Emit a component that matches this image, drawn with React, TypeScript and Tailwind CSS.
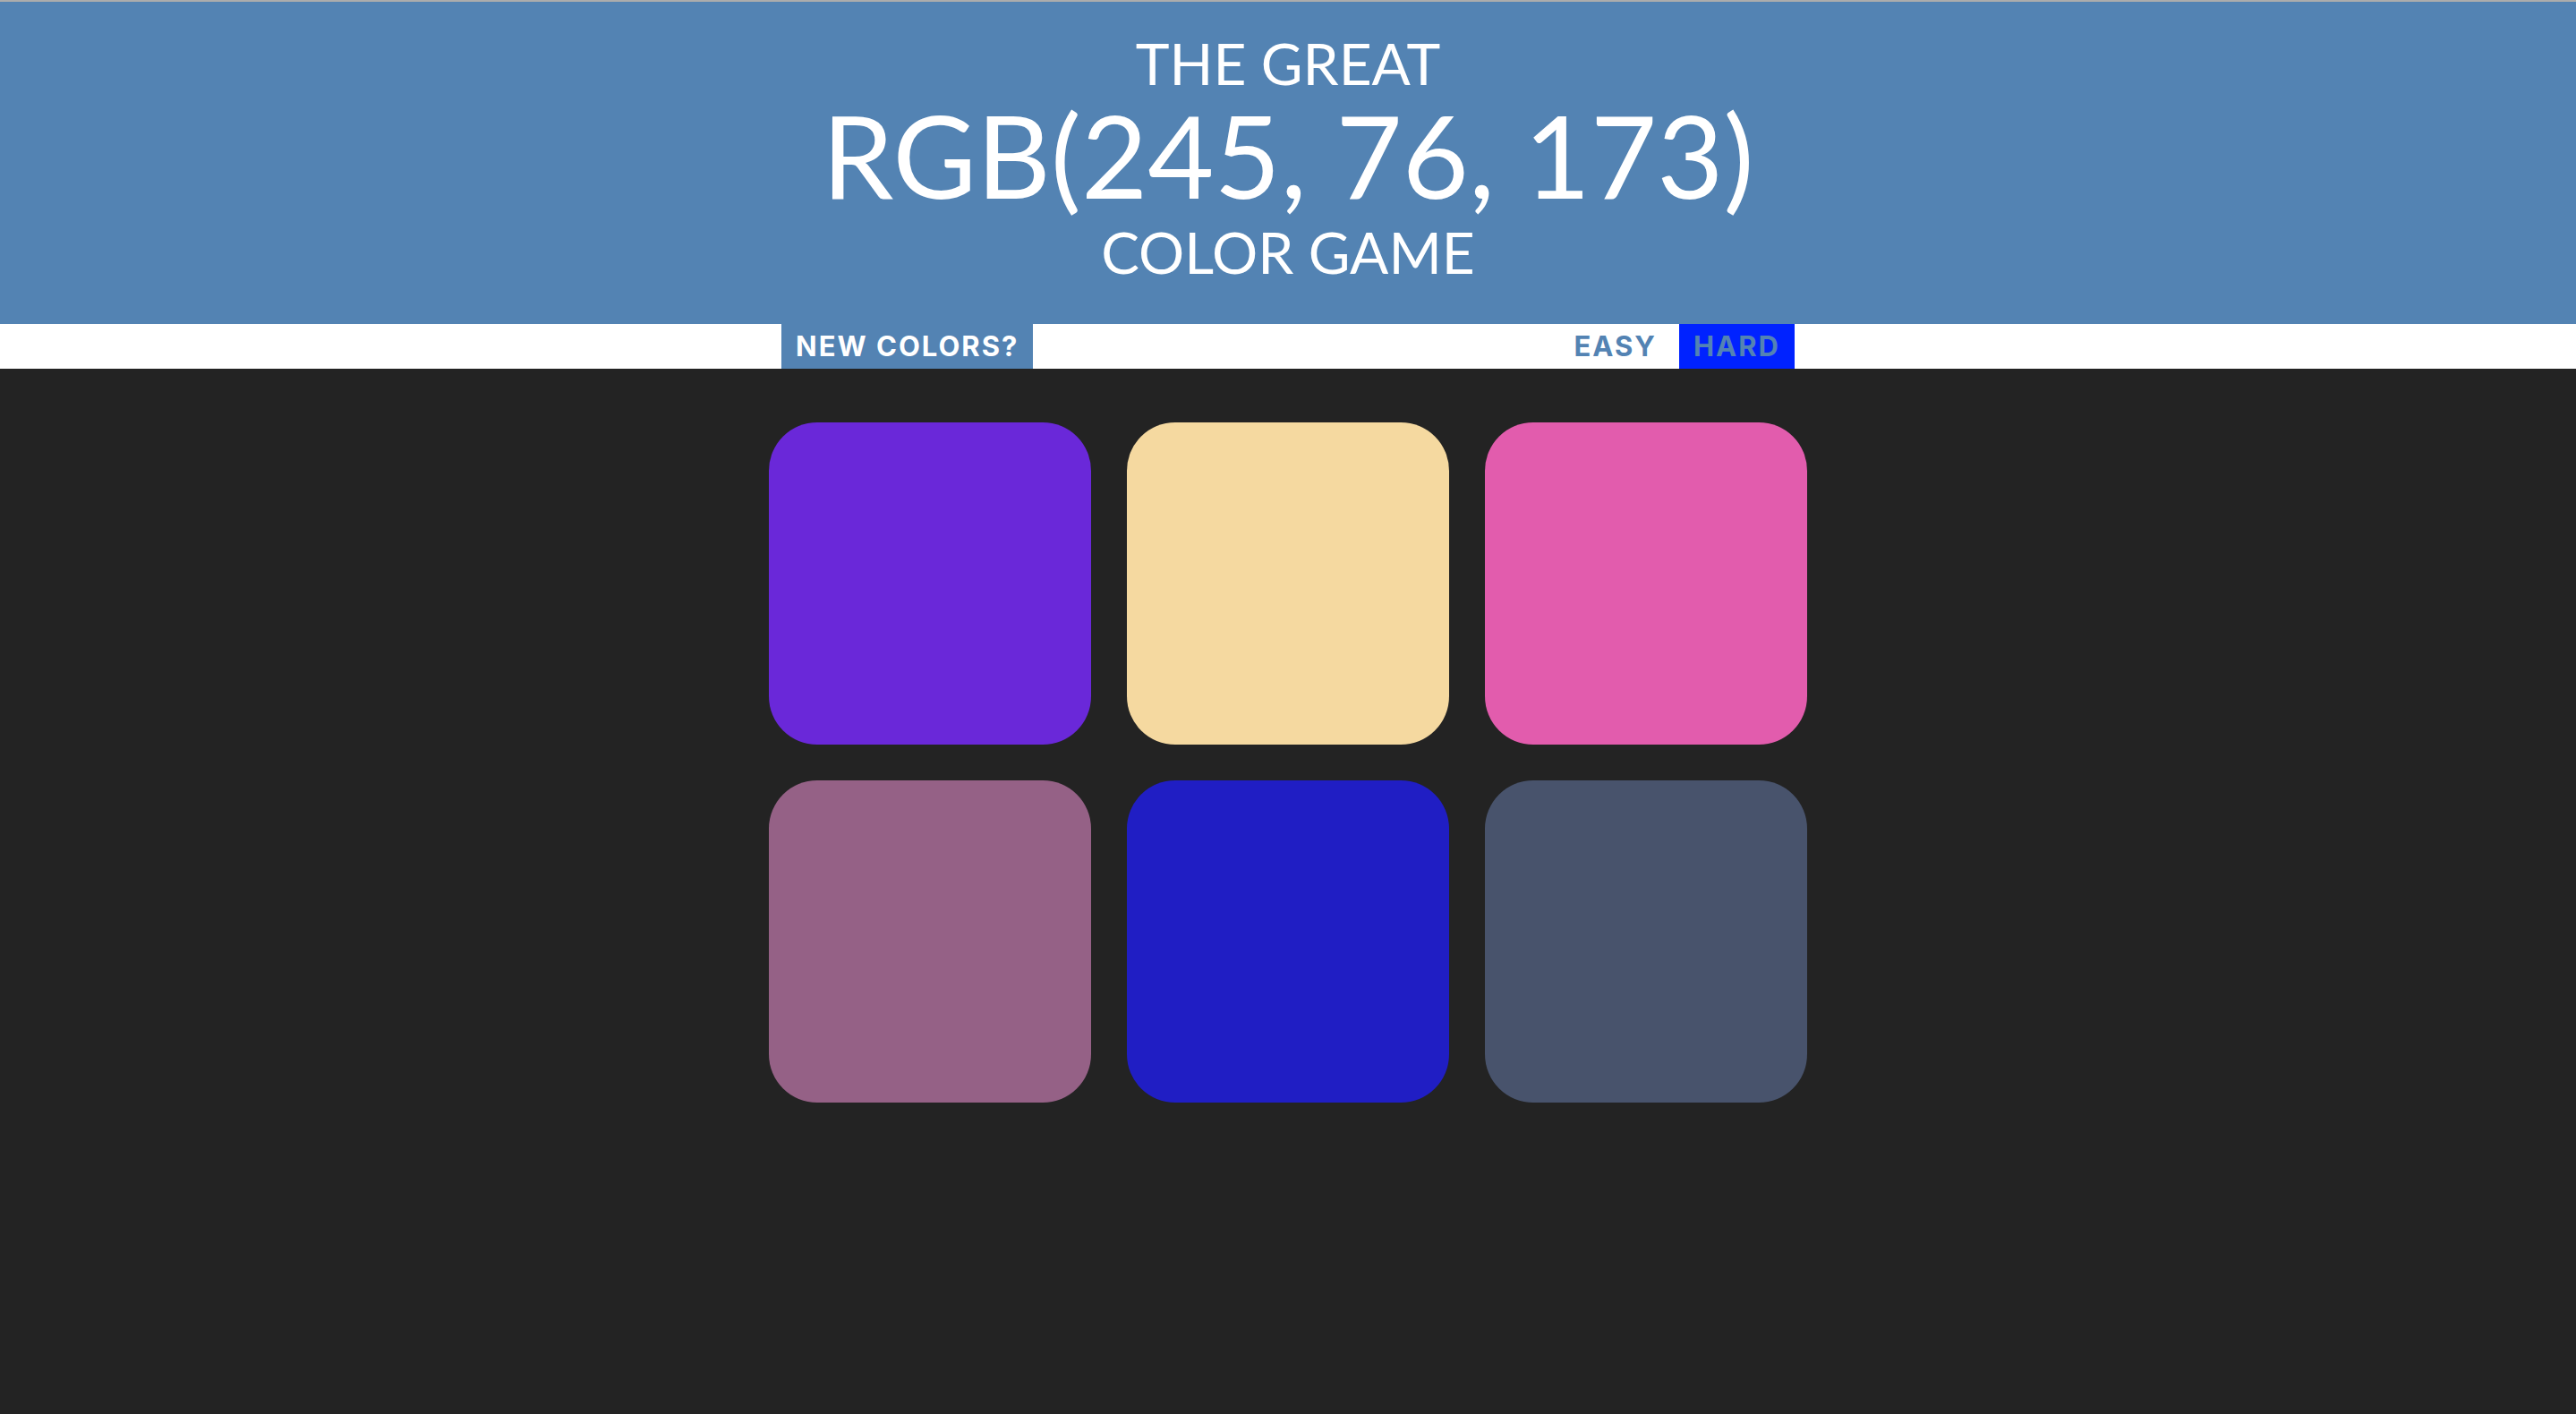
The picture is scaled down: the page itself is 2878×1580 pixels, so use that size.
import { useState } from "react";

const squares = ["#6a28d9", "#f5d9a0", "#e25cad", "#956186", "#201ec4", "#48536c"];

export default function App() {
  const [mode, setMode] = useState<"easy" | "hard">("hard");

  const modeBtn = (m: "easy" | "hard") =>
    `px-4 uppercase tracking-[2px] text-[#5383b3] ${mode === m ? "bg-[#0022ff]" : "bg-white"}`;

  return (
    <div className="min-h-screen w-full bg-[#232323] font-['Lato','Liberation_Sans',sans-serif]">
      <h1 className="box-border h-[362px] border-t-2 border-[#acacac] bg-[#5383b3] pt-[31px] text-center font-normal uppercase text-white">
        <div className="text-[64px] leading-[76px]">The Great</div>
        <div className="text-[128px] leading-[128px]">RGB(245, 76, 173)</div>
        <div className="text-[64px] leading-[90px]">Color Game</div>
      </h1>

      <div className="h-[50px] bg-white">
        <div className="mx-auto flex h-full w-[1132px] items-stretch font-['Inter','Liberation_Sans',sans-serif] text-[31px] font-bold">
          <button className="bg-[#5383b3] px-4 uppercase tracking-[2px] text-white">New Colors?</button>
          <span className="flex-1" />
          <button onClick={() => setMode("easy")} className={modeBtn("easy")}>
            Easy
          </button>
          <button onClick={() => setMode("hard")} className={`ml-[9px] ${modeBtn("hard")}`}>
            Hard
          </button>
        </div>
      </div>

      <div className="mx-auto mt-[60px] grid w-[1160px] grid-cols-3 gap-[40px]">
        {squares.map((c) => (
          <div key={c} className="h-[360px] w-[360px] rounded-[54px]" style={{ background: c }} />
        ))}
      </div>
    </div>
  );
}
